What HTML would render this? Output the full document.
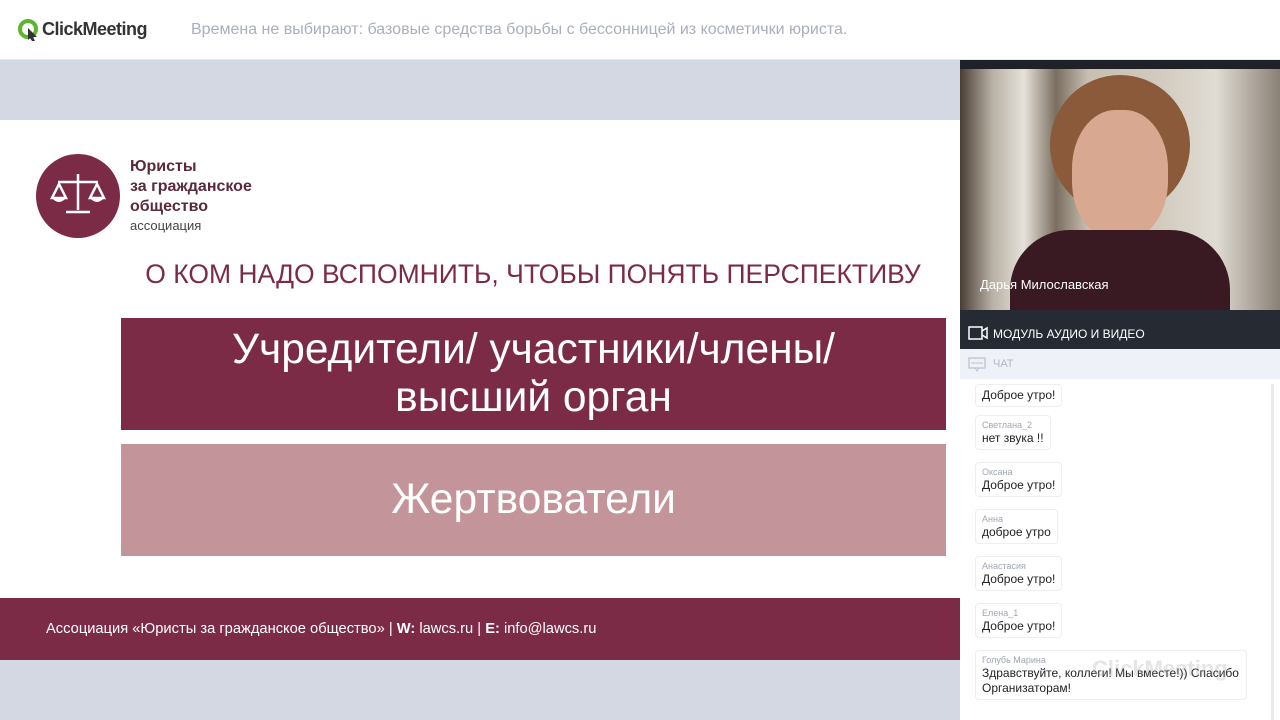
<!DOCTYPE html>
<html><head><meta charset="utf-8"><style>
*{margin:0;padding:0;box-sizing:border-box}
body{width:1280px;height:720px;overflow:hidden;background:#fff;font-family:"Liberation Sans","Noto Sans CJK SC",sans-serif;position:relative}
.abs{position:absolute}
.msg{position:absolute;left:975px;background:#fff;border:1px solid #eceef2;border-radius:4px;padding:3px 6px;font-size:12px;color:#222;line-height:15px}
.msg .n{font-size:9px;color:#a0a6b4;line-height:12px}
</style></head><body>
<div class="abs" style="left:0;top:0;width:1280px;height:60px;background:#fff;border-bottom:1px solid #e6e8ee"></div>
<svg class="abs" style="left:18px;top:19px" width="22" height="22" viewBox="0 0 22 22"><circle cx="10" cy="10" r="8" fill="none" stroke="#5bb52e" stroke-width="4"/><path d="M10 9 L19 18 L15 18 L17 22 L14 22 L12 19 L10 21Z" fill="#333"/></svg>
<div class="abs" style="left:42px;top:19px;font-size:18px;font-weight:bold;color:#333;letter-spacing:-0.5px">ClickMeeting</div>
<div class="abs" style="left:191px;top:21px;font-size:16px;color:#a9aec0">Времена не выбирают: базовые средства борьбы с бессонницей из косметички юриста.</div>
<div class="abs" style="left:0;top:60px;width:960px;height:60px;background:#d3d8e2"></div>
<div class="abs" style="left:0;top:120px;width:960px;height:478px;background:#fff"></div>
<div class="abs" style="left:36px;top:154px;width:84px;height:84px;border-radius:50%;background:#7c2b47"></div>
<svg class="abs" style="left:50px;top:170px" width="56" height="50" viewBox="0 0 56 50"><g stroke="#fff" stroke-width="2.5" fill="none"><line x1="28" y1="4" x2="28" y2="40"/><line x1="8" y1="12" x2="48" y2="12"/><line x1="16" y1="42" x2="40" y2="42"/><path d="M2 28 L9 14 L16 28 Z"/><path d="M40 28 L47 14 L54 28 Z"/></g><path d="M2 28 Q9 36 16 28Z M40 28 Q47 36 54 28Z" fill="#fff"/></svg>
<div class="abs" style="left:130px;top:157px;font-size:16px;font-weight:bold;color:#5a2a3a;line-height:20px">Юристы<br>за гражданское<br>общество</div>
<div class="abs" style="left:130px;top:218px;font-size:13px;color:#444">ассоциация</div>
<div class="abs" style="left:0;top:259px;width:1066px;text-align:center;font-size:26.5px;color:#7c2b47">О КОМ НАДО ВСПОМНИТЬ, ЧТОБЫ ПОНЯТЬ ПЕРСПЕКТИВУ</div>
<div class="abs" style="left:121px;top:318px;width:825px;height:112px;background:#7c2b47;color:#fff;font-size:42.5px;text-align:center;line-height:48px;padding-top:8px">Учредители/ участники/члены/<br>высший орган</div>
<div class="abs" style="left:121px;top:444px;width:825px;height:112px;background:#c3959a;color:#fff;font-size:42.5px;text-align:center;line-height:112px">Жертвователи</div>
<div class="abs" style="left:0;top:598px;width:960px;height:62px;background:#7c2b47;color:#fff;font-size:14.7px;line-height:62px;padding-left:46px">Ассоциация «Юристы за гражданское общество» | <b>W:</b> lawcs.ru | <b>E:</b> info@lawcs.ru</div>
<div class="abs" style="left:0;top:660px;width:960px;height:60px;background:#d3d8e2"></div>
<div class="abs" style="left:960px;top:60px;width:320px;height:250px;background:linear-gradient(90deg,#4a3e34 0%,#b8b0a4 10%,#e6e2da 20%,#7a6e60 30%,#c8bfb2 40%,#d0c8bc 60%,#e0dcd4 80%,#8a8076 100%)"></div>
<div class="abs" style="left:960px;top:60px;width:320px;height:9px;background:#1e2228"></div>
<div class="abs" style="left:1050px;top:75px;width:140px;height:140px;border-radius:50%;background:#8a5a3a"></div>
<div class="abs" style="left:1072px;top:110px;width:96px;height:130px;border-radius:45%;background:#d8a890"></div>
<div class="abs" style="left:1010px;top:230px;width:220px;height:80px;border-radius:60px 60px 0 0;background:#3a1a22"></div>
<div class="abs" style="left:980px;top:277px;font-size:13px;color:#fff">Дарья Милославская</div>
<div class="abs" style="left:960px;top:310px;width:320px;height:39px;background:#262b33"></div>
<svg class="abs" style="left:968px;top:326px" width="20" height="14" viewBox="0 0 20 14"><rect x="1" y="1" width="13" height="12" fill="none" stroke="#fff" stroke-width="1.5"/><path d="M14 5 L19 2 V12 L14 9" fill="none" stroke="#fff" stroke-width="1.5"/></svg>
<div class="abs" style="left:993px;top:327px;font-size:12px;color:#fff">МОДУЛЬ АУДИО И ВИДЕО</div>
<div class="abs" style="left:960px;top:349px;width:320px;height:30px;background:#eef1f7"></div>
<svg class="abs" style="left:968px;top:357px" width="18" height="16" viewBox="0 0 18 16"><rect x="1" y="1" width="16" height="10" fill="none" stroke="#bcc3d0" stroke-width="1.3"/><line x1="3" y1="6" x2="15" y2="6" stroke="#bcc3d0"/><path d="M7 11 L9 14 L11 11" fill="none" stroke="#bcc3d0"/></svg>
<div class="abs" style="left:993px;top:358px;font-size:11px;color:#b0b6c4">ЧАТ</div>
<div class="abs" style="left:1271px;top:384px;width:3px;height:336px;background:#e8eaee"></div>
<div class="msg" style="top:384px">Доброе утро!</div>
<div class="msg" style="top:415px"><div class="n">Светлана_2</div>нет звука !!</div>
<div class="msg" style="top:462px"><div class="n">Оксана</div>Доброе утро!</div>
<div class="msg" style="top:509px"><div class="n">Анна</div>доброе утро</div>
<div class="msg" style="top:556px"><div class="n">Анастасия</div>Доброе утро!</div>
<div class="msg" style="top:603px"><div class="n">Елена_1</div>Доброе утро!</div>
<div class="msg" style="top:650px;width:272px"><div class="n">Голубь Марина</div>Здравствуйте, коллеги! Мы вместе!)) Спасибо Организаторам!</div>
<div class="abs" style="left:1092px;top:656px;font-size:22px;font-weight:bold;color:rgba(150,150,150,0.25)">ClickMeeting</div>
</body></html>
